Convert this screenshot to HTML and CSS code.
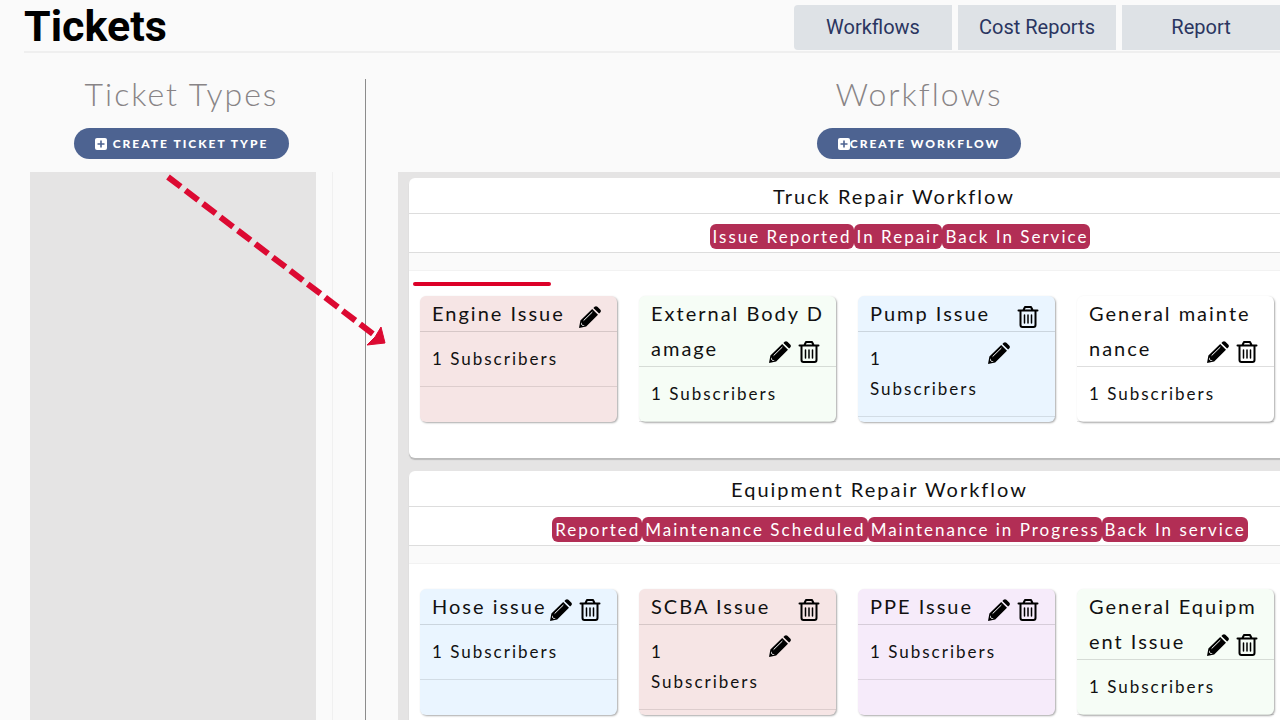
FILE: index.html
```html
<!DOCTYPE html>
<html lang="en">
<head>
    <meta charset="UTF-8">
    <meta name="viewport" content="width=device-width, initial-scale=1.0">
    <title>Tickets</title>
    <link rel="stylesheet" href="styles.css">
</head>
<body>
    <svg class="icon-defs" aria-hidden="true">
        <symbol id="pencil" viewBox="0 0 22 22">
            <path d="M0 22 L1.4 14.6 L13.2 3 L19 8.8 L7.2 20.4 Z M14.4 1.9 L15.6 .8 Q17 -.4 18.4 .8 L21.2 3.6 Q22.6 5 21.2 6.4 L20.1 7.6 Z"/>
            <path d="M4.6 14.6 L13.4 6" fill="none" stroke="#fff" stroke-width="1"/>
            <path d="M2.6 16.2 L3.2 18.8 L5.8 19.4 L3.8 20 L2 18.2 Z" fill="#fff"/>
        </symbol>
        <symbol id="trash" viewBox="0 0 22 22">
            <g fill="none" stroke="#000" stroke-width="2" stroke-linecap="round" stroke-linejoin="round">
                <path d="M1.5 4.5 H20.5 M6.5 4 L8 1 H14 L15.5 4 M3.5 5 V19 Q3.5 21 5.5 21 H16.5 Q18.5 21 18.5 19 V5"/>
                <path d="M7.5 9 V17 M11 9 V17 M14.5 9 V17" stroke-width="1.5"/>
            </g>
        </symbol>
        <symbol id="plus" viewBox="0 0 12 12">
            <rect width="12" height="12" rx="2" fill="#fff"/>
            <path d="M6 2.5 V9.5 M2.5 6 H9.5" stroke="#4d6391" stroke-width="1.6"/>
        </symbol>
    </svg>

    <header class="page-header">
        <h1>Tickets</h1>
        <nav class="tabs">
            <a href="#workflows">Workflows</a>
            <a href="#cost-reports">Cost Reports</a>
            <a href="#report">Report</a>
        </nav>
    </header>

    <main class="page">
        <section class="types">
            <h2>Ticket Types</h2>
            <button class="create spaced"><svg><use href="#plus"/></svg>Create Ticket Type</button>
            <div class="types-scroll">
                <div class="types-panel"></div>
            </div>
        </section>

        <section class="workflows" id="workflows">
            <h2>Workflows</h2>
            <button class="create"><svg><use href="#plus"/></svg>Create Workflow</button>
            <div class="workflow-panel">
                <article class="workflow">
                    <h3>Truck Repair Workflow</h3>
                    <div class="steps">
                        <span>Issue Reported</span><span>In Repair</span><span>Back In Service</span>
                    </div>
                    <div class="band"></div>
                    <div class="tickets">
                        <div class="ticket red">
                            <div class="ticket-title">
                                <div class="line">Engine Issue
                                    <span class="actions"><button aria-label="Edit"><svg><use href="#pencil"/></svg></button></span>
                                </div>
                            </div>
                            <div class="ticket-body"><p>1 Subscribers</p></div>
                        </div>
                        <div class="ticket green">
                            <div class="ticket-title">
                                <div class="line">External Body D</div>
                                <div class="line">amage
                                    <span class="actions"><button aria-label="Edit"><svg><use href="#pencil"/></svg></button><button aria-label="Delete"><svg><use href="#trash"/></svg></button></span>
                                </div>
                            </div>
                            <div class="ticket-body"><p>1 Subscribers</p></div>
                        </div>
                        <div class="ticket blue">
                            <div class="ticket-title">
                                <div class="line">Pump Issue
                                    <span class="actions"><button aria-label="Delete"><svg><use href="#trash"/></svg></button></span>
                                </div>
                            </div>
                            <div class="ticket-body">
                                <p>1<br>Subscribers</p>
                                <span class="actions wrapped"><button aria-label="Edit"><svg><use href="#pencil"/></svg></button></span>
                            </div>
                        </div>
                        <div class="ticket white">
                            <div class="ticket-title">
                                <div class="line">General mainte</div>
                                <div class="line">nance
                                    <span class="actions"><button aria-label="Edit"><svg><use href="#pencil"/></svg></button><button aria-label="Delete"><svg><use href="#trash"/></svg></button></span>
                                </div>
                            </div>
                            <div class="ticket-body"><p>1 Subscribers</p></div>
                        </div>
                    </div>
                </article>

                <article class="workflow removable">
                    <h3>Equipment Repair Workflow</h3>
                    <div class="steps">
                        <span>Reported</span><span>Maintenance Scheduled</span><span>Maintenance in Progress</span><span>Back In service</span>
                    </div>
                    <div class="band"></div>
                    <div class="tickets">
                        <div class="ticket blue">
                            <div class="ticket-title">
                                <div class="line">Hose issue
                                    <span class="actions"><button aria-label="Edit"><svg><use href="#pencil"/></svg></button><button aria-label="Delete"><svg><use href="#trash"/></svg></button></span>
                                </div>
                            </div>
                            <div class="ticket-body"><p>1 Subscribers</p></div>
                        </div>
                        <div class="ticket red">
                            <div class="ticket-title">
                                <div class="line">SCBA Issue
                                    <span class="actions"><button aria-label="Delete"><svg><use href="#trash"/></svg></button></span>
                                </div>
                            </div>
                            <div class="ticket-body">
                                <p>1<br>Subscribers</p>
                                <span class="actions wrapped"><button aria-label="Edit"><svg><use href="#pencil"/></svg></button></span>
                            </div>
                        </div>
                        <div class="ticket purple">
                            <div class="ticket-title">
                                <div class="line">PPE Issue
                                    <span class="actions"><button aria-label="Edit"><svg><use href="#pencil"/></svg></button><button aria-label="Delete"><svg><use href="#trash"/></svg></button></span>
                                </div>
                            </div>
                            <div class="ticket-body"><p>1 Subscribers</p></div>
                        </div>
                        <div class="ticket green">
                            <div class="ticket-title">
                                <div class="line">General Equipm</div>
                                <div class="line">ent Issue
                                    <span class="actions"><button aria-label="Edit"><svg><use href="#pencil"/></svg></button><button aria-label="Delete"><svg><use href="#trash"/></svg></button></span>
                                </div>
                            </div>
                            <div class="ticket-body"><p>1 Subscribers</p></div>
                        </div>
                    </div>
                </article>
            </div>
        </section>
    </main>

    <!-- hint arrow from the ticket types to the first ticket -->
    <svg class="hint" width="600" height="360" aria-hidden="true">
        <path d="M168 177 L373 334" fill="none" stroke="#dc0a32" stroke-width="6" stroke-dasharray="16 6"/>
        <path d="M381 327 L385 343 L367 345 L375 337 Z" fill="#dc0a32" stroke="#dc0a32" stroke-linejoin="round"/>
        <path d="M415 284 H549" stroke="#dc0028" stroke-width="4" stroke-linecap="round"/>
    </svg>
</body>
</html>
```
FILE: styles.css
```css
* {
    box-sizing: border-box;
}
body {
    margin: 0;
    height: 100vh;
    overflow: hidden;
    display: flex;
    flex-direction: column;
    background-color: #fafafa;
    color: #111;
    font-family: Lato, sans-serif;
}
.icon-defs {
    display: none;
}
h1, h2, h3, p {
    margin: 0;
}
.page-header {
    display: flex;
    justify-content: space-between;
    margin-left: 24px;
    height: 53px;
    border-bottom: 2px solid #efefef;
    font-family: Roboto, sans-serif;
}
h1 {
    font-size: 43px;
    line-height: 53px;
    font-weight: 700;
    color: #000;
}
.tabs {
    display: flex;
    gap: 6px;
    padding-top: 5px;
}
.tabs a {
    width: 158px;
    height: 45px;
    line-height: 45px;
    background-color: #dee2e6;
    color: #2a3560;
    font-size: 20px;
    text-align: center;
    text-decoration: none;
}
.tabs a:first-child {
    border-radius: 4px 0 0 4px;
}
/* the workflow list runs wider than the window */
.page {
    display: flex;
    flex: 1;
    width: 115%;
    padding-top: 26px;
    min-height: 0;
}
.types {
    width: 366px;
    display: flex;
    flex-direction: column;
    align-items: center;
    padding-right: 2px;
    border-right: 1px solid #8c8c8c;
}
.workflows {
    flex: 1;
    display: flex;
    flex-direction: column;
    align-items: center;
    padding: 0 32px;
}
h2 {
    font-size: 32px;
    line-height: 30px;
    font-weight: 300;
    letter-spacing: 2px;
    color: #888486;
    margin-bottom: 19px;
}
.create {
    display: flex;
    flex-shrink: 0;
    align-items: center;
    height: 31px;
    padding: 0 21px;
    border: none;
    border-radius: 16px;
    background-color: #4d6391;
    color: white;
    font-family: Lato, sans-serif;
    font-size: 12px;
    font-weight: 900;
    letter-spacing: 2px;
    text-transform: uppercase;
    cursor: pointer;
}
.create svg {
    width: 12px;
    height: 12px;
}
.create.spaced svg {
    margin-right: 6px;
}
.types-scroll {
    flex: 1;
    align-self: stretch;
    margin: 13px 30px 0;
    padding-right: 16px;
    border-right: 1px solid #f0f0f0;
}
.types-panel {
    height: 100%;
    background-color: #e5e4e4;
}
.workflow-panel {
    flex: 1;
    align-self: stretch;
    margin-top: 13px;
    padding: 6px 61px 0 11px;
    background-color: #e5e4e4;
}
.workflow {
    margin-bottom: 13px;
    padding-bottom: 36px;
    border-radius: 6px;
    background-color: white;
    box-shadow: 0 2px 1px #bbb;
}
h3 {
    height: 36px;
    line-height: 36px;
    border-bottom: 1px solid #ddd;
    font-size: 20px;
    font-weight: 400;
    letter-spacing: 2px;
    text-align: center;
}
.removable h3 {
    padding-right: 29px;
}
.steps {
    display: flex;
    justify-content: center;
    height: 39px;
    padding: 10px 0 0 12px;
    border-bottom: 1px solid #ddd;
}
.steps span {
    height: 25px;
    line-height: 25px;
    padding: 0 2px 0 3px;
    border-radius: 6px;
    background-color: #b22e55;
    color: white;
    font-size: 17px;
    letter-spacing: 2px;
    white-space: nowrap;
}
.band {
    height: 18px;
    background-color: #fafafa;
    border-bottom: 1px solid #f2f2f2;
}
.tickets {
    display: grid;
    grid-template-columns: repeat(auto-fill, 197px);
    gap: 22px;
    padding: 25px 11px 0;
}
.ticket {
    min-height: 125px;
    border-radius: 6px;
    box-shadow: 1px 1px 2px #aaa;
}
.ticket.red {
    background-color: #f6e5e5;
}
.ticket.green {
    background-color: #f6fdf6;
}
.ticket.blue {
    background-color: #eaf5ff;
}
.ticket.purple {
    background-color: #f6ebfa;
}
.ticket.white {
    background-color: white;
}
.ticket-title {
    padding: 0 16px 0 12px;
    border-bottom: 1px solid rgba(0,0,0,0.13);
}
.line {
    display: flex;
    justify-content: space-between;
    height: 35px;
    line-height: 35px;
    font-size: 20px;
    letter-spacing: 2px;
    white-space: nowrap;
}
.actions {
    display: flex;
    gap: 7px;
    height: 35px;
    padding-top: 10px;
}
.actions.wrapped {
    margin-right: 29px;
}
.actions button {
    width: 22px;
    height: 22px;
    padding: 0;
    border: none;
    background: none;
    cursor: pointer;
}
.actions svg {
    display: block;
    width: 22px;
    height: 22px;
}
.ticket-body {
    display: flex;
    justify-content: space-between;
    padding: 0 16px 0 12px;
    border-bottom: 1px solid rgba(0,0,0,0.1);
}
.ticket-body p {
    padding: 12px 0;
    font-size: 17px;
    line-height: 30px;
    letter-spacing: 2px;
    white-space: nowrap;
}
.hint {
    position: absolute;
    top: 0;
    left: 0;
    pointer-events: none;
}
```
